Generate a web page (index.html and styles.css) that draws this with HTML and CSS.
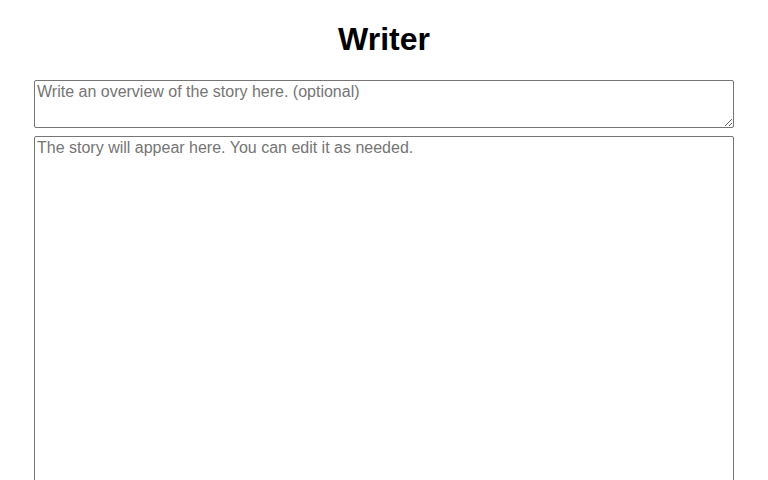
FILE: index.html
```html
<!DOCTYPE html>
<html lang="en">
<head>
<meta charset="utf-8">
<title>Writer</title>
<link rel="stylesheet" href="styles.css">
</head>
<body>
<main class="app">
  <h1 class="title">Writer</h1>
  <div class="editor">
    <textarea class="overview" placeholder="Write an overview of the story here. (optional)"></textarea>
    <textarea class="story" placeholder="The story will appear here. You can edit it as needed."></textarea>
  </div>
</main>
</body>
</html>
```
FILE: styles.css
```css
html, body {
  background: #ffffff;
}
body {
  margin: 8px;
  font-family: "Liberation Sans", Arial, sans-serif;
}
.app {
  display: flex;
  flex-direction: column;
  align-items: center;
}
.title {
  font-size: 32px;
  font-weight: bold;
  margin: 13.44px 0 21.44px;
  line-height: 37px;
  color: #000;
}
.editor {
  width: 700px;
  display: flex;
  flex-direction: column;
  gap: 8px;
}
.overview, .story {
  box-sizing: border-box;
  width: 700px;
  font-family: "Liberation Sans", Arial, sans-serif;
  font-size: 16px;
  padding: 2px;
  border: 1px solid #767676;
  border-radius: 2px;
  margin: 0;
  color: #000;
}
.overview::placeholder, .story::placeholder {
  color: #757575;
}
.overview {
  height: 48px;
}
.story {
  height: 520px;
}
```
